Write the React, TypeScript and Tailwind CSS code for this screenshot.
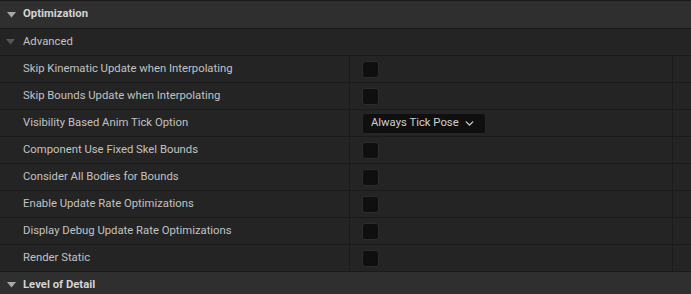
import { ChevronDown } from "lucide-react";

const checks = [
    "Skip Kinematic Update when Interpolating",
    "Skip Bounds Update when Interpolating",
];

const checks2 = [
    "Component Use Fixed Skel Bounds",
    "Consider All Bodies for Bounds",
    "Enable Update Rate Optimizations",
    "Display Debug Update Rate Optimizations",
    "Render Static",
];

const Triangle = ({ color }: { color: string }) => (
    <svg width="9" height="6" viewBox="0 0 9 6" className="shrink-0">
        <path d="M0 0 L9 0 L4.5 5.5 Z" fill={color} />
    </svg>
);

const Category = ({ label, first }: { label: string; first?: boolean }) => (
    <div className={first
        ? "flex items-center h-[28px] gap-[7px] pl-[7px] bg-[#2f2f2f] border-b border-[#1a1a1a] font-bold text-[#d4d4d4]"
        : "flex items-center h-[27px] gap-[7px] pl-[7px] bg-[#2f2f2f] border-b border-[#1a1a1a] font-bold text-[#d4d4d4]"}>
        <Triangle color="#a8a8a8" />
        <span>{label}</span>
    </div>
);

const Checkbox = () => (
    <div className="w-[17px] h-[17px] rounded-[3px] bg-[#0f0f0f] border border-[#2c2c2c]" />
);

const Row = ({ label, children }: { label: string; children: React.ReactNode }) => (
    <div className="flex h-[27px] bg-[#242424] border-b border-[#1a1a1a]">
        <div className="w-[350px] flex items-center pl-[23px] border-r border-[#1a1a1a]">{label}</div>
        <div className="w-[323px] flex items-center pl-[12px] border-r border-[#1a1a1a]">{children}</div>
        <div className="flex-1" />
    </div>
);

const App = () => {
    return (
        <div className="w-[691px] h-[294px] overflow-hidden bg-[#242424] text-[11.3px] text-[#c2c2c2] border-t border-[#1a1a1a]" style={{ fontFamily: "Roboto, 'Noto Sans', sans-serif" }}>
            <Category label="Optimization" first />
            <div className="flex items-center h-[27px] gap-[8px] pl-[6px] bg-[#242424] border-b border-[#1a1a1a]">
                <Triangle color="#565656" />
                <span>Advanced</span>
            </div>
            {checks.map(c => <Row key={c} label={c}><Checkbox /></Row>)}
            <Row label="Visibility Based Anim Tick Option">
                <div className="flex items-center justify-between w-[124px] h-[21px] pl-[8px] pr-[9px] rounded-[3px] bg-[#0f0f0f] border border-[#262626] text-[#cfcfcf]">
                    <span>Always Tick Pose</span>
                    <ChevronDown size={13} strokeWidth={2.5} color="#d0d0d0" />
                </div>
            </Row>
            {checks2.map(c => <Row key={c} label={c}><Checkbox /></Row>)}
            <Category label="Level of Detail" />
        </div>
    );
};

export default App;
